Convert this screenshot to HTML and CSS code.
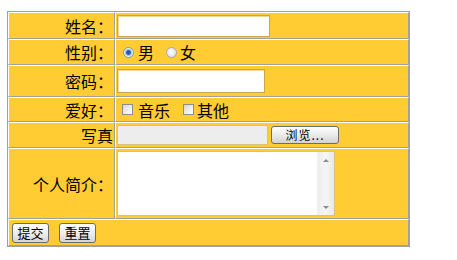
FILE: index.html
```html
<!DOCTYPE html>
<html lang="zh-CN">
<head>
    <meta charset="UTF-8">
    <title>个人信息</title>
    <link rel="stylesheet" href="styles.css">
</head>
<body>
    <form class="info-form">
        <table class="form-table">
            <tr class="row-name">
                <td class="label">姓名：</td>
                <td class="field"><input type="text" class="text-input name-input"></td>
            </tr>
            <tr class="row-sex">
                <td class="label">性别：</td>
                <td class="field">
                    <div class="options">
                        <input type="radio" name="sex" id="sex-m" class="radio first" checked>
                        <label for="sex-m" class="opt-text">男</label>
                        <input type="radio" name="sex" id="sex-f" class="radio">
                        <label for="sex-f" class="opt-text">女</label>
                    </div>
                </td>
            </tr>
            <tr class="row-pwd">
                <td class="label">密码：</td>
                <td class="field"><input type="password" class="text-input pwd-input"></td>
            </tr>
            <tr class="row-hobby">
                <td class="label">爱好：</td>
                <td class="field">
                    <div class="options">
                        <input type="checkbox" id="h-music" class="check first">
                        <label for="h-music" class="opt-text">音乐</label>
                        <input type="checkbox" id="h-other" class="check">
                        <label for="h-other" class="opt-text">其他</label>
                    </div>
                </td>
            </tr>
            <tr class="row-photo">
                <td class="label">写真</td>
                <td class="field">
                    <div class="file-line">
                        <span class="file-path"></span>
                        <button type="button" class="browse-btn">浏览...</button>
                    </div>
                </td>
            </tr>
            <tr class="row-intro">
                <td class="label">个人简介：</td>
                <td class="field">
                    <div class="memo">
                        <textarea class="memo-text"></textarea>
                        <div class="memo-scroll">
                            <span class="arrow-up"></span>
                            <span class="arrow-down"></span>
                        </div>
                    </div>
                </td>
            </tr>
            <tr class="row-buttons">
                <td colspan="2" class="buttons-cell">
                    <div class="buttons">
                        <button type="submit" class="form-btn">提交</button>
                        <button type="reset" class="form-btn">重置</button>
                    </div>
                </td>
            </tr>
        </table>
    </form>
</body>
</html>
```

FILE: styles.css
```css
body {
    margin: 0;
    padding: 11px 0 0 7px;
    font-family: "Noto Sans CJK SC", "Liberation Sans", sans-serif;
    background-color: #fff;
    color: #000;
}

.info-form {
    margin: 0;
}

.form-table {
    border-collapse: separate;
    border-spacing: 0;
    border: 1px solid #a0a0a0;
    background-color: #ffcc33;
    width: 403px;
}

.form-table td {
    box-sizing: border-box;
    border-top: 1px solid #fff;
    border-left: 1px solid #fff;
    border-right: 1px solid #a0a0a0;
    border-bottom: 1px solid #a0a0a0;
    padding: 0 1px;
    font-size: 16px;
    line-height: 16px;
    vertical-align: middle;
}

.form-table td.label {
    width: 107px;
    text-align: right;
    white-space: nowrap;
}

.row-name td { height: 27px; }
.row-sex td { height: 26px; }
.row-pwd td { height: 32px; }
.row-hobby td { height: 25px; }
.row-photo td { height: 26px; }
.row-intro td { height: 71px; }
.row-buttons td { height: 27px; }

/* текстовые поля */
.text-input {
    display: block;
    box-sizing: border-box;
    margin: 0;
    padding: 0 2px;
    border: 1px solid #caa64a;
    box-shadow: inset 1px 1px 0 #eed89a;
    background: #fff;
    font-size: 13px;
    outline: none;
}

.name-input {
    width: 153px;
    height: 22px;
}

.pwd-input {
    width: 148px;
    height: 24px;
}

/* радио и чекбоксы */
.options {
    display: flex;
    align-items: center;
}

.radio,
.check {
    appearance: none;
    -webkit-appearance: none;
    box-sizing: border-box;
    width: 11px;
    height: 11px;
    margin: 0;
    flex: none;
}

.radio {
    border-radius: 50%;
    border: 1px solid #a4a9b0;
    background: radial-gradient(circle at 45% 45%, #ffffff 0, #e4e6e8 60%, #c9ccd0 100%);
    margin-left: 12px;
    margin-right: 3px;
}

.radio.first {
    margin-left: 6px;
    margin-right: 4px;
}

.radio:checked {
    border-color: #8a96a4;
    background: radial-gradient(circle, #1d4f96 0, #2f6cc0 2px, #9cc0e6 3px, #eef2f6 4px, #c9ccd0 100%);
}

.check {
    border: 1px solid #8c8c8c;
    background: linear-gradient(135deg, #d6d6d6 0, #f4f4f4 70%, #ffffff 100%);
    margin-left: 13px;
    margin-right: 3px;
}

.check.first {
    margin-left: 5px;
    margin-right: 5px;
}

.opt-text {
    white-space: nowrap;
}

/* поле файла */
.file-line {
    display: flex;
    align-items: center;
}

.file-path {
    display: block;
    box-sizing: border-box;
    width: 151px;
    height: 20px;
    border: 1px solid #d9c27c;
    background: #ededed;
}

.browse-btn {
    box-sizing: border-box;
    width: 68px;
    height: 18px;
    margin: 0 0 0 3px;
    padding: 0;
    border: 1px solid #6d6d6d;
    border-radius: 3px;
    background: linear-gradient(#ffffff, #e6e6e6 60%, #d2d2d2);
    font-family: "Noto Sans CJK SC", sans-serif;
    font-size: 12px;
    line-height: 14px;
    color: #000;
    letter-spacing: 1px;
}

/* многострочное поле */
.memo {
    display: flex;
    box-sizing: border-box;
    width: 218px;
    height: 65px;
    border: 1px solid #d9c27c;
    background: #fff;
}

.memo-text {
    flex: 1;
    margin: 0;
    padding: 0;
    border: 0;
    resize: none;
    outline: none;
    background: #fff;
}

.memo-scroll {
    display: flex;
    flex-direction: column;
    justify-content: space-between;
    align-items: center;
    width: 16px;
    padding: 7px 0 6px;
    background: linear-gradient(90deg, #eeeeee, #f6f6f6 50%, #e8e8e8);
    border-left: 1px solid #f0f0f0;
}

.arrow-up,
.arrow-down {
    width: 0;
    height: 0;
    border-left: 3px solid transparent;
    border-right: 3px solid transparent;
}

.arrow-up {
    border-bottom: 3px solid #8a8a8a;
}

.arrow-down {
    border-top: 3px solid #8a8a8a;
}

/* кнопки */
.form-table td.buttons-cell {
    text-align: left;
}

.buttons {
    display: flex;
    align-items: center;
    gap: 10px;
    padding-left: 2px;
}

.form-btn {
    box-sizing: border-box;
    width: 37px;
    height: 20px;
    margin: 0;
    padding: 0;
    border: 1px solid #6b6b6b;
    border-radius: 3px;
    background: linear-gradient(#ffffff, #ececec 55%, #d4d4d4);
    font-family: "Noto Sans CJK SC", sans-serif;
    font-size: 13px;
    line-height: 16px;
    color: #000;
}
```
